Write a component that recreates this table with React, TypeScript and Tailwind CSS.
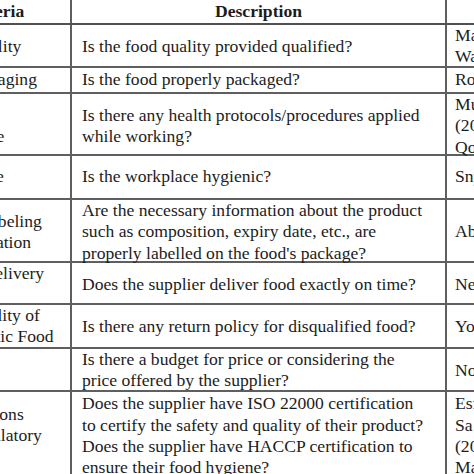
import React from "react";

type Row = {
  h: string;
  c1: string[];
  c2: string[];
  c3: string[];
};

const rows: Row[] = [
  {
    h: "h-[43px]",
    c1: ["Meal Quality"],
    c2: ["Is the food quality provided qualified?"],
    c3: ["Mardiana", "Wahyuni (2019)"],
  },
  {
    h: "h-[26px]",
    c1: ["Safe Packaging"],
    c2: ["Is the food properly packaged?"],
    c3: ["Rosli et al. (2020)"],
  },
  {
    h: "h-[62px]",
    c1: ["Health", "Adherence"],
    c2: ["Is there any health protocols/procedures applied", "while working?"],
    c3: ["Mustapha et al.", "(2021); Zhang", "Qodriyah (2020)"],
  },
  {
    h: "h-[44px]",
    c1: ["Workplace"],
    c2: ["Is the workplace hygienic?"],
    c3: ["Snyder (2018)"],
  },
  {
    h: "h-[63px]",
    c1: ["Proper Labeling", "of Information"],
    c2: [
      "Are the necessary information about the product",
      "such as composition, expiry date, etc., are",
      "properly labelled on the food's package?",
    ],
    c3: ["Abdullah (2019)"],
  },
  {
    h: "h-[42px]",
    c1: ["Timely Delivery", "of Food"],
    c2: ["Does the supplier deliver food exactly on time?"],
    c3: ["Nemati (2017)"],
  },
  {
    h: "h-[44px]",
    c1: ["Returnability of", "Problematic Food"],
    c2: ["Is there any return policy for disqualified food?"],
    c3: ["Youssef (2019)"],
  },
  {
    h: "h-[43px]",
    c1: ["Price"],
    c2: [
      "Is there a budget for price or considering the",
      "price offered by the supplier?",
    ],
    c3: ["Noor (2020)"],
  },
  {
    h: "h-[90px]",
    c1: ["Certifications", "with Regulatory", "Standards"],
    c2: [
      "Does the supplier have ISO 22000 certification",
      "to certify the safety and quality of their product?",
      "Does the supplier have HACCP certification to",
      "ensure their food hygiene?",
    ],
    c3: ["Esfahani et al.", "Sa et al.", "(2020);", "Martins"],
  },
];

function Lines({ lines }: { lines: string[] }) {
  return (
    <>
      {lines.map((l, i) => (
        <span key={i} className="block whitespace-nowrap">
          {l}
        </span>
      ))}
    </>
  );
}

export default function App() {
  return (
    <div
      className="w-[474px] h-[474px] overflow-hidden bg-white text-[#1c1c1c] text-[17.6px] leading-[21.3px]"
      style={{ fontFamily: '"Liberation Serif", "Times New Roman", serif' }}
    >
      <div className="ml-[-82px] w-[729px] flex flex-col">
        {/* header */}
        <div className="grid grid-cols-[154px_375px_200px] h-[25px] border-b-2 border-[#505050] font-bold">
          <div className="flex items-center justify-center border-r-2 border-[#5f5f5f] pl-[10px] pr-[10px] whitespace-nowrap">
            Criteria
          </div>
          <div className="flex items-center justify-center border-r-2 border-[#5f5f5f] whitespace-nowrap">
            Description
          </div>
          <div className="flex items-center justify-center whitespace-nowrap">
            References
          </div>
        </div>
        {rows.map((r, i) => (
          <div
            key={i}
            className={`grid grid-cols-[154px_375px_200px] ${r.h} border-b-2 border-[#5f5f5f]`}
          >
            <div className="flex flex-col justify-center border-r-2 border-[#5f5f5f] pl-[10px]">
              <Lines lines={r.c1} />
            </div>
            <div className="flex flex-col justify-center border-r-2 border-[#5f5f5f] pl-[10px]">
              <Lines lines={r.c2} />
            </div>
            <div className="flex flex-col justify-center pl-[8px]">
              <Lines lines={r.c3} />
            </div>
          </div>
        ))}
      </div>
    </div>
  );
}
